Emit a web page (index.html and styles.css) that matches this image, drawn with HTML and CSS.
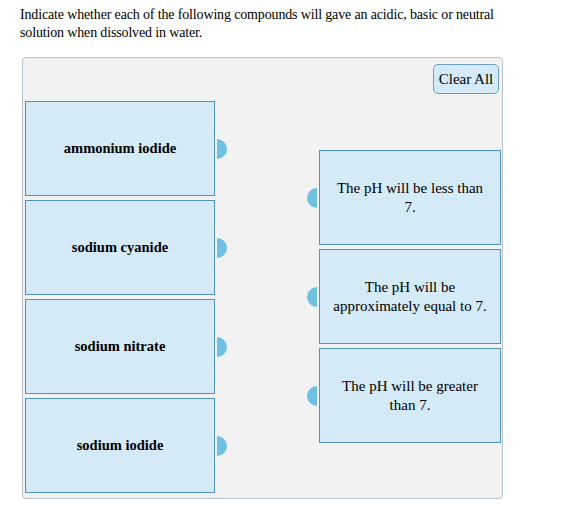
FILE: index.html
```html
<html lang="en">
  <head>
    <meta charset="UTF-8" />
    <title>Acid / Base Matching</title>
    <link rel="stylesheet" href="styles.css">
  </head>
  <body>
    <div class="question">
      <p class="prompt">
        Indicate whether each of the following compounds will gave an acidic, basic or neutral
        solution when dissolved in water.
      </p>
      <div class="board">
        <div class="toolbar">
          <button class="clear-btn">Clear All</button>
        </div>
        <div class="columns">
          <!-- compounds, each with a connector on its right -->
          <div class="col col-left">
            <div class="item">
              <div class="card source">ammonium iodide</div>
              <span class="knob knob-right"></span>
            </div>
            <div class="item">
              <div class="card source">sodium cyanide</div>
              <span class="knob knob-right"></span>
            </div>
            <div class="item">
              <div class="card source">sodium nitrate</div>
              <span class="knob knob-right"></span>
            </div>
            <div class="item">
              <div class="card source">sodium iodide</div>
              <span class="knob knob-right"></span>
            </div>
          </div>
          <!-- answers, connector on the left -->
          <div class="col col-right">
            <div class="item">
              <span class="knob knob-left"></span>
              <div class="card target">The pH will be less than 7.</div>
            </div>
            <div class="item">
              <span class="knob knob-left"></span>
              <div class="card target">The pH will be approximately equal to 7.</div>
            </div>
            <div class="item">
              <span class="knob knob-left"></span>
              <div class="card target">The pH will be greater than 7.</div>
            </div>
          </div>
        </div>
      </div>
    </div>
  </body>
</html>
```

FILE: styles.css
```css
html,
body {
  margin: 0;
  padding: 0;
}
* {
  box-sizing: border-box;
}
body {
  font-family: "Liberation Serif", "Times New Roman", serif;
  background: #fff;
  color: #000;
}
.question {
  padding: 6px 0 0 20px;
}
.prompt {
  margin: 0;
  font-size: 14px;
  letter-spacing: -0.15px;
  line-height: 18px;
  width: 500px;
}
/* Grey board holding both columns */
.board {
  margin: 15px 0 0 2px;
  width: 481px;
  height: 442px;
  background: #f2f2f2;
  border: 1px solid #bac3cc;
  border-radius: 4px;
  padding: 6px 1px 0 2px;
}
.toolbar {
  display: flex;
  justify-content: flex-end;
  padding-right: 2px;
  height: 30px;
}
.clear-btn {
  font-family: "Liberation Serif", "Times New Roman", serif;
  font-size: 15px;
  color: #000;
  background: #d4eaf7;
  border: 1px solid #6b9fc4;
  border-radius: 5px;
  height: 30px;
  width: 66px;
  padding: 0;
}
.columns {
  display: flex;
  justify-content: space-between;
  margin-top: 7px;
}
.col {
  display: flex;
  flex-direction: column;
  gap: 4px;
}
.col-right {
  margin-top: 49px;
}
.item {
  display: flex;
  align-items: center;
}
.card {
  height: 95px;
  background: #d4eaf7;
  border: 1px solid #4f93c0;
  display: flex;
  align-items: center;
  justify-content: center;
  text-align: center;
}
.card.source {
  width: 190px;
  font-size: 14.5px;
  font-weight: bold;
}
.card.target {
  width: 182px;
  height: 95px;
  font-size: 15px;
  line-height: 19px;
  padding: 0 12px;
}
/* Half-round connectors */
.knob {
  width: 10px;
  height: 20px;
  background: #6fc0e2;
}
.knob-right {
  margin-left: 2px;
  border-radius: 0 10px 10px 0;
}
.knob-left {
  margin-right: 2px;
  border-radius: 10px 0 0 10px;
}
```
